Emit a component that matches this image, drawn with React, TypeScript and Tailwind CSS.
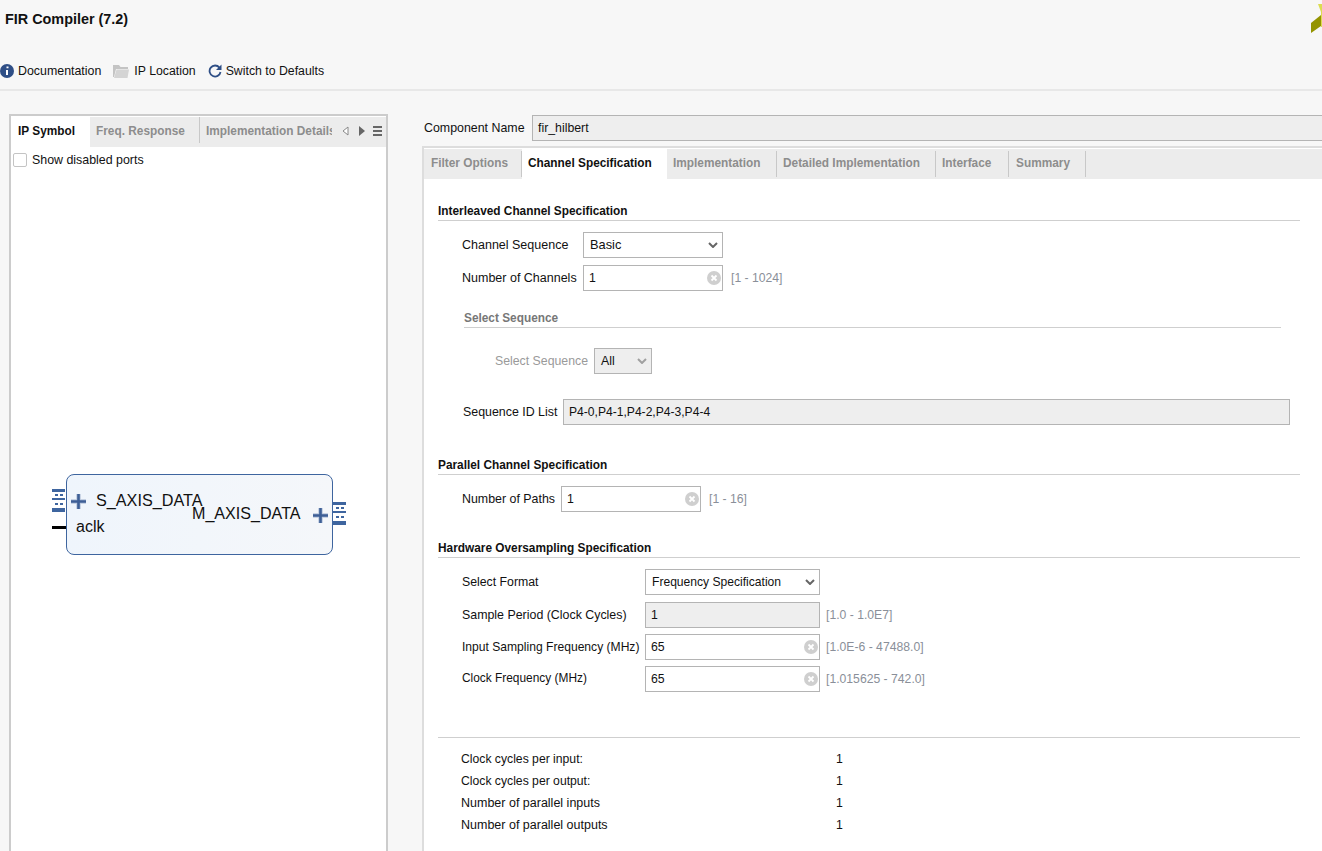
const font = { fontFamily: '"Liberation Sans", Arial, sans-serif' };

function Chevron({ muted }: { muted?: boolean }) {
  return (
    <svg width="10" height="6" viewBox="0 0 10 6" className="shrink-0">
      <path d="M1 1 L5 5 L9 1" fill="none" stroke={muted ? '#a0a0a0' : '#666'} strokeWidth="2" />
    </svg>
  );
}

function ClearIcon() {
  return (
    <svg width="14" height="14" viewBox="0 0 14 14" className="shrink-0">
      <circle cx="7" cy="7" r="7" fill="#cfcfcf" />
      <path d="M4.5 4.5 L9.5 9.5 M9.5 4.5 L4.5 9.5" stroke="#fff" strokeWidth="1.8" />
    </svg>
  );
}

function Select({ value, width, disabled, size = 'text-[12.3px]' }: { value: string; width: string; disabled?: boolean; size?: string }) {
  return (
    <div className={`${width} ${size} h-[26px] flex items-center justify-between pl-[6px] pr-[4px] border border-[#b4b4b4] text-[#111] ${disabled ? 'bg-[#eeeeee]' : 'bg-white'}`}>
      <span>{value}</span>
      <Chevron muted={disabled} />
    </div>
  );
}

function Input({ value, width, range, disabled, gap = 'ml-[6px]' }: { value: string; width: string; range?: string; disabled?: boolean; gap?: string }) {
  return (
    <div className="flex items-center">
      <div className={`${width} h-[26px] flex items-center justify-between pl-[5px] pr-[1px] border border-[#b4b4b4] text-[12.3px] text-[#111] ${disabled ? 'bg-[#eeeeee]' : 'bg-white'}`}>
        <span>{value}</span>
        {!disabled && <ClearIcon />}
      </div>
      {range && <span className={`${gap} text-[12.2px] text-[#8a8f99]`}>{range}</span>}
    </div>
  );
}

function SectionTitle({ text, muted }: { text: string; muted?: boolean }) {
  return (
    <div className={`h-[17px] border-b border-[#cfcfcf] text-[11.85px] font-bold leading-[14px] ${muted ? 'text-[#777]' : 'text-[#111]'}`}>
      {text}
    </div>
  );
}

function PortGlyph() {
  return (
    <svg width="13" height="23" viewBox="0 0 13 23" className="block">
      <rect x="0" y="0" width="13" height="3" fill="#3e659f" />
      <rect x="0" y="9" width="13" height="2" fill="#3e659f" />
      <rect x="0" y="19" width="13" height="4" fill="#3e659f" />
      <rect x="3" y="5" width="3" height="2" fill="#3e659f" />
      <rect x="8" y="5" width="3" height="2" fill="#3e659f" />
      <rect x="3" y="14" width="3" height="2" fill="#3e659f" />
      <rect x="8" y="14" width="3" height="2" fill="#3e659f" />
    </svg>
  );
}

function PlusGlyph() {
  return (
    <svg width="15" height="15" viewBox="0 0 15 15" className="block">
      <path d="M7.5 0 V15 M0 7.5 H15" stroke="#b9c6dc" strokeWidth="4.4" />
      <path d="M7.5 0 V15 M0 7.5 H15" stroke="#3e5f96" strokeWidth="2.6" />
    </svg>
  );
}

const stats = ['Clock cycles per input:', 'Clock cycles per output:', 'Number of parallel inputs', 'Number of parallel outputs'];

export default function App() {
  return (
    <div style={font} className="relative w-[1322px] h-[851px] overflow-hidden bg-[#f7f7f7] text-[#111] text-[12.3px]">
      <svg width="11" height="30" viewBox="0 0 11 30" className="absolute left-[1311px] top-[4px]">
        <path d="M0 19 L10 11 V22 L0 29 Z" fill="#949400" />
        <path d="M7 0 L11 0 V23 L10 23 V8 Z" fill="#dcdc50" />
      </svg>

      <header className="h-[91px] border-b-2 border-[#e8e8e8] relative">
        <div className="pl-[5px] pt-[11px] text-[14.4px] leading-[16px] font-bold">FIR Compiler (7.2)</div>
        <div className="mt-[35px] flex items-center h-[18px] text-[12.4px]">
          <svg width="14" height="14" viewBox="0 0 14 14">
            <circle cx="7" cy="7" r="7" fill="#2f4f86" />
            <path d="M7.5 2.5 V4.2 M7 6 V11" stroke="#fff" strokeWidth="2" />
          </svg>
          <span className="ml-[4px]">Documentation</span>
          <svg width="16" height="14" viewBox="0 0 16 14" className="ml-[12px]">
            <path d="M0 1 H6 L7.5 3 H15 V5 H3 L1 13 H0 Z" fill="#c4c4c4" />
            <path d="M3.5 5.5 H16 L14.5 14 H1 Z" fill="#d4d4d4" />
          </svg>
          <span className="ml-[5px] text-[12.3px]">IP Location</span>
          <svg width="14" height="14" viewBox="0 0 14 14" className="ml-[12px]">
            <path d="M11.4 3.6 A5.5 5.5 0 1 0 12.5 8" fill="none" stroke="#2f4f86" strokeWidth="1.8" />
            <path d="M13.5 0.5 V6 H8 Z" fill="#2f4f86" />
          </svg>
          <span className="ml-[4px] text-[12.3px]">Switch to Defaults</span>
        </div>
      </header>

      <main className="flex items-start pt-[23px] h-[760px]">
        <section className="ml-[9px] w-[379px] h-[737px] border-2 border-[#cccccc] border-b-0 bg-white relative">
          <div className="h-[30px] mt-[1px] ml-[1px] flex bg-[#ececec] text-[11.85px] font-bold">
            <div className="w-[78px] bg-white pl-[6px] pb-[1px] flex items-center">IP Symbol</div>
            <div className="w-[109px] pl-[6px] pb-[1px] flex items-center text-[#8d8d8d]">
              <span>Freq. Response</span>
            </div>
            <div className="w-px h-[26px] bg-[#c8c8c8]" />
            <div className="w-[132px] pl-[6px] pb-[1px] flex items-center text-[#8d8d8d] overflow-hidden whitespace-nowrap">Implementation Details</div>
            <div className="flex items-center ml-[10px] pb-[2px]">
              <svg width="7" height="10" viewBox="0 0 7 10"><path d="M6 1 L1 5 L6 9 Z" fill="#fff" stroke="#888" /></svg>
              <svg width="7" height="10" viewBox="0 0 7 10" className="ml-[9px]"><path d="M1 0 L7 5 L1 10 Z" fill="#666" /></svg>
              <svg width="9" height="10" viewBox="0 0 9 10" className="ml-[8px]"><path d="M0 1 H9 M0 5 H9 M0 9 H9" stroke="#666" strokeWidth="2" /></svg>
            </div>
          </div>
          <label className="flex items-center ml-[2px] mt-[5px] h-[16px]">
            <span className="w-[14px] h-[14px] border border-[#c4c4c4] rounded-[2px] bg-white" />
            <span className="ml-[5px] text-[12.4px]">Show disabled ports</span>
          </label>

          {/* IP block sits on a free canvas */}
          <div className="absolute left-[55px] top-[358px] w-[267px] h-[81px] rounded-[8px] border border-[#3e659f] bg-gradient-to-r from-[#eff5fc] to-[#f5f7fa]" />
          <div className="absolute left-[41px] top-[373px]"><PortGlyph /></div>
          <div className="absolute left-[41px] top-[410px] w-[14px] h-[3px] bg-black" />
          <div className="absolute left-[60px] top-[378px]"><PlusGlyph /></div>
          <div className="absolute left-[85px] top-[375px] text-[16.2px] leading-[18px]">S_AXIS_DATA</div>
          <div className="absolute left-[65px] top-[402px] text-[16px] leading-[18px]">aclk</div>
          <div className="absolute left-[181px] top-[388px] text-[16.1px] leading-[18px]">M_AXIS_DATA</div>
          <div className="absolute left-[302px] top-[392px]"><PlusGlyph /></div>
          <div className="absolute left-[322px] top-[386px]"><PortGlyph /></div>
        </section>

        <section className="ml-[34px] flex-1 min-w-0 pt-[1px]">
          <div className="flex items-center h-[26px] ml-[2px]">
            <span className="w-[108px] pt-[1px] text-[12.4px]">Component Name</span>
            <div className="flex-1 h-[26px] flex items-center pl-[5px] bg-[#eeeeee] border border-[#b4b4b4] border-r-0">fir_hilbert</div>
          </div>

          <div className="mt-[5px] h-[710px] border-t-2 border-l-2 border-[#dddddd] bg-white">
            <div className="h-[30px] mt-[1px] flex bg-[#ececec] text-[11.85px] font-bold text-[#8d8d8d]">
              <div className="w-[98px] pl-[7px] flex items-center border-r border-[#c8c8c8] my-[2px]">Filter Options</div>
              <div className="w-[145px] pl-[6px] flex items-center bg-white text-[#111]">Channel Specification</div>
              <div className="w-[110px] pl-[6px] flex items-center border-r border-[#c8c8c8] my-[2px]">Implementation</div>
              <div className="w-[159px] pl-[6px] flex items-center border-r border-[#c8c8c8] my-[2px]">Detailed Implementation</div>
              <div className="w-[73px] pl-[6px] flex items-center border-r border-[#c8c8c8] my-[2px]">Interface</div>
              <div className="w-[77px] pl-[7px] flex items-center border-r border-[#c8c8c8] my-[2px]">Summary</div>
            </div>

            <div className="pl-[14px] pr-[22px] pt-[25px]">
              <SectionTitle text="Interleaved Channel Specification" />
              <div className="ml-[24px] mt-[11px] flex items-center">
                <span className="w-[121px] text-[12.5px]">Channel Sequence</span>
                <Select value="Basic" width="w-[140px]" size="text-[12.8px]" />
              </div>
              <div className="ml-[24px] mt-[7px] flex items-center">
                <span className="w-[121px] text-[12.5px]">Number of Channels</span>
                <Input value="1" width="w-[140px]" range="[1 - 1024]" gap="ml-[8px]" />
              </div>

              <div className="ml-[26px] mr-[19px] mt-[20px]">
                <SectionTitle text="Select Sequence" muted />
              </div>
              <div className="ml-[57px] mt-[20px] flex items-center">
                <span className="w-[99px] text-[#9a9a9a]">Select Sequence</span>
                <Select value="All" width="w-[58px]" disabled />
              </div>
              <div className="ml-[25px] mt-[25px] flex items-center">
                <span className="w-[100px] text-[12.4px]">Sequence ID List</span>
                <div className="w-[727px] h-[26px] flex items-center pl-[5px] text-[12.1px] bg-[#eeeeee] border border-[#b4b4b4]">P4-0,P4-1,P4-2,P4-3,P4-4</div>
              </div>

              <div className="mt-[33px]"><SectionTitle text="Parallel Channel Specification" /></div>
              <div className="ml-[24px] mt-[11px] flex items-center">
                <span className="w-[99px] text-[12.4px]">Number of Paths</span>
                <Input value="1" width="w-[140px]" range="[1 - 16]" gap="ml-[8px]" />
              </div>

              <div className="mt-[29px]"><SectionTitle text="Hardware Oversampling Specification" /></div>
              <div className="ml-[24px] mt-[11px] flex items-center">
                <span className="w-[183px]">Select Format</span>
                <Select value="Frequency Specification" width="w-[175px]" size="text-[12.1px]" />
              </div>
              <div className="ml-[24px] mt-[7px] flex items-center">
                <span className="w-[183px] text-[12.4px]">Sample Period (Clock Cycles)</span>
                <Input value="1" width="w-[175px]" range="[1.0 - 1.0E7]" disabled />
              </div>
              <div className="ml-[24px] mt-[6px] flex items-center">
                <span className="w-[183px] text-[12.1px] whitespace-nowrap">Input Sampling Frequency (MHz)</span>
                <Input value="65" width="w-[175px]" range="[1.0E-6 - 47488.0]" />
              </div>
              <div className="ml-[24px] mt-[6px] flex items-center">
                <span className="w-[183px] text-[11.9px]">Clock Frequency (MHz)</span>
                <Input value="65" width="w-[175px]" range="[1.015625 - 742.0]" />
              </div>

              <div className="mt-[45px] border-t border-[#cfcfcf] pt-[10px] pl-[23px]">
                {stats.map((label, i) => (
                  <div key={label} className="h-[22px] flex items-center">
                    <span className={`w-[375px] ${i < 2 ? 'text-[12.2px]' : 'text-[12.5px]'}`}>{label}</span>
                    <span>1</span>
                  </div>
                ))}
              </div>
            </div>
          </div>
        </section>
      </main>
    </div>
  );
}
